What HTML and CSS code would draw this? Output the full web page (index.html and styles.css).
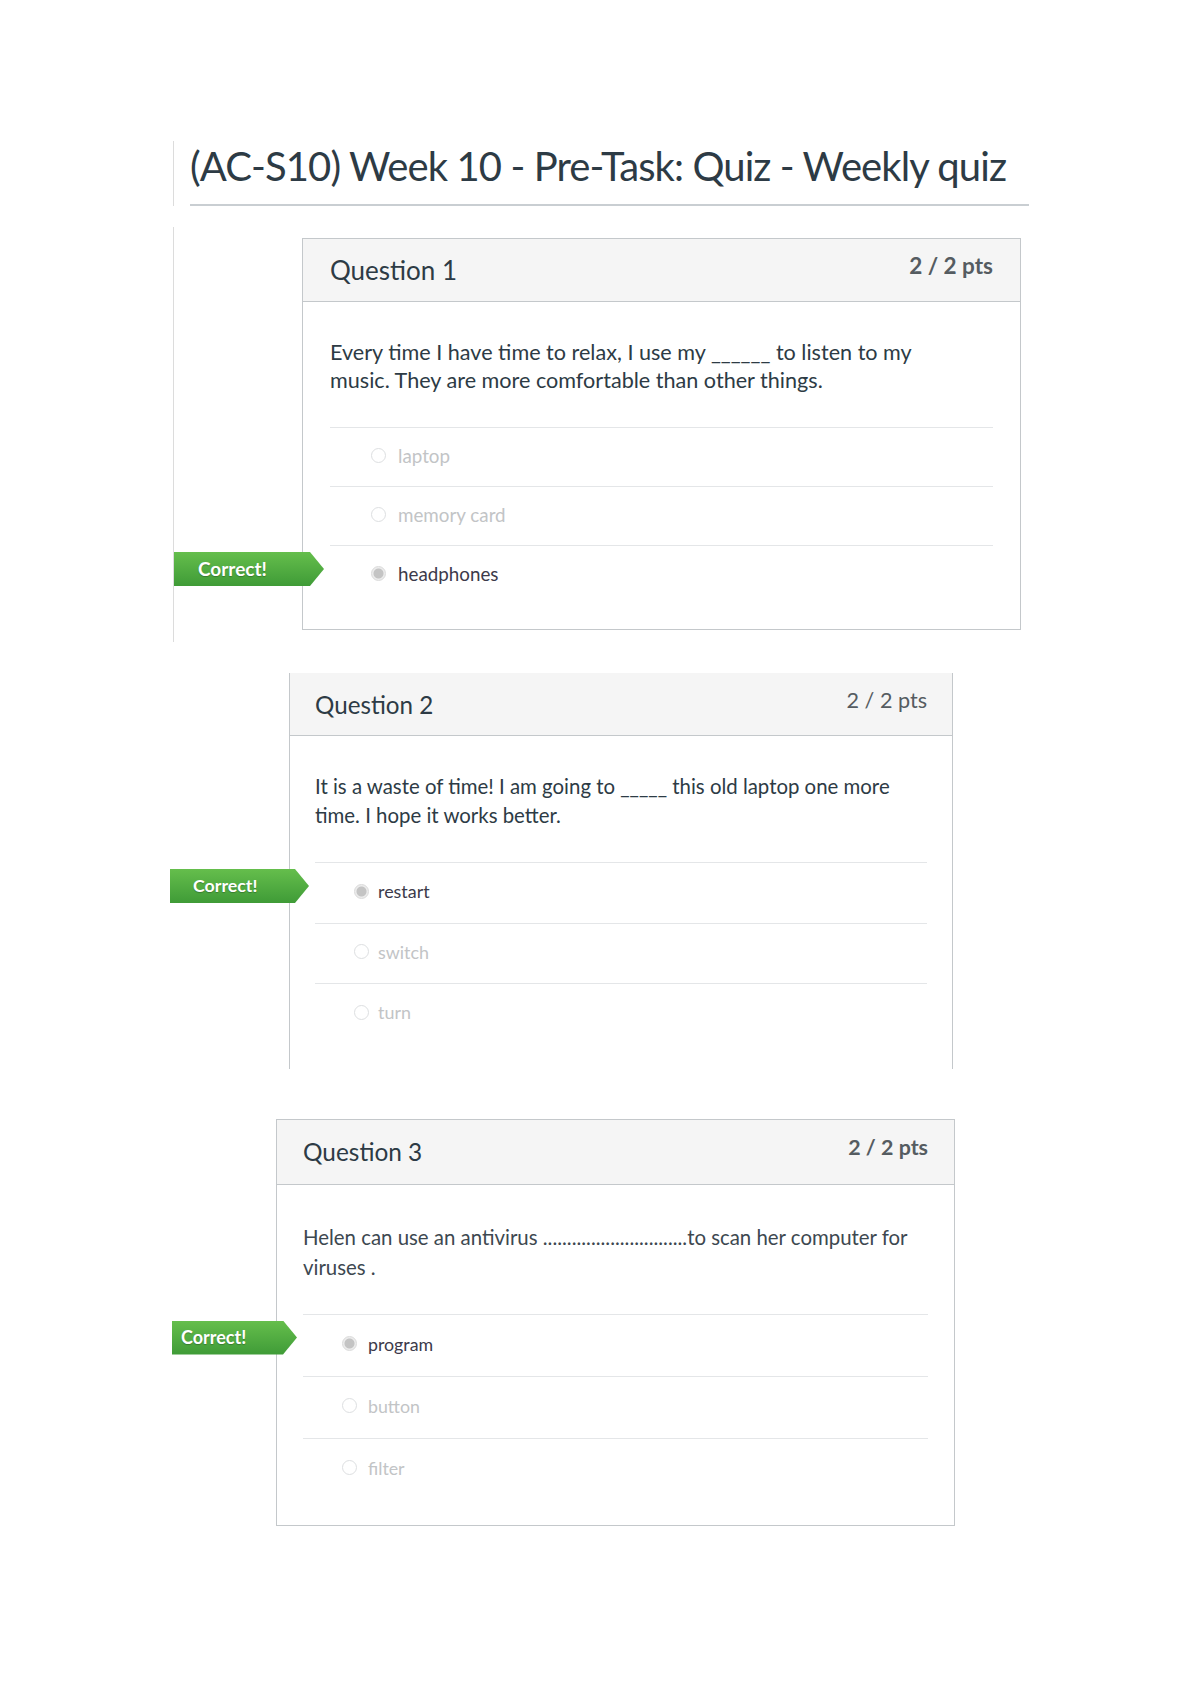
FILE: index.html
```html
<!DOCTYPE html>
<html lang="en">
<head>
<meta charset="utf-8">
<title>(AC-S10) Week 10 - Pre-Task: Quiz - Weekly quiz</title>
<link rel="stylesheet" href="styles.css">
</head>
<body>
<div class="page">
  <header class="title-block">
    <h1 class="title">(AC-S10) Week 10 - Pre-Task: Quiz - Weekly quiz</h1>
  </header>

  <section class="q-wrap q-wrap--1">
    <div class="card card--1">
      <div class="card-head">
        <h2 class="q-name">Question 1</h2>
        <span class="q-pts q-pts--bold">2 / 2 pts</span>
      </div>
      <div class="card-body">
        <p class="q-text">Every time I have time to relax, I use my ______ to listen to my<br>music. They are more comfortable than other things.</p>
        <ul class="answers">
          <li class="answer"><span class="radio"></span><span class="answer-label">laptop</span></li>
          <li class="answer"><span class="radio"></span><span class="answer-label">memory card</span></li>
          <li class="answer answer--picked"><span class="badge">Correct!</span><span class="radio radio--on"></span><span class="answer-label">headphones</span></li>
        </ul>
      </div>
    </div>
  </section>

  <section class="q-wrap q-wrap--2">
    <div class="card card--2">
      <div class="card-head">
        <h2 class="q-name">Question 2</h2>
        <span class="q-pts">2 / 2 pts</span>
      </div>
      <div class="card-body">
        <p class="q-text">It is a waste of time! I am going to _____ this old laptop one more<br>time. I hope it works better.</p>
        <ul class="answers">
          <li class="answer answer--picked"><span class="badge">Correct!</span><span class="radio radio--on"></span><span class="answer-label">restart</span></li>
          <li class="answer"><span class="radio"></span><span class="answer-label">switch</span></li>
          <li class="answer"><span class="radio"></span><span class="answer-label">turn</span></li>
        </ul>
      </div>
    </div>
  </section>

  <section class="q-wrap q-wrap--3">
    <div class="card card--3">
      <div class="card-head">
        <h2 class="q-name">Question 3</h2>
        <span class="q-pts q-pts--bold">2 / 2 pts</span>
      </div>
      <div class="card-body">
        <p class="q-text q-text--light">Helen can use an antivirus ..............................to scan her computer for<br>viruses .</p>
        <ul class="answers">
          <li class="answer answer--picked"><span class="badge">Correct!</span><span class="radio radio--on"></span><span class="answer-label">program</span></li>
          <li class="answer"><span class="radio"></span><span class="answer-label">button</span></li>
          <li class="answer"><span class="radio"></span><span class="answer-label">filter</span></li>
        </ul>
      </div>
    </div>
  </section>
</div>
</body>
</html>
```

FILE: styles.css
```css
* { box-sizing: border-box; }

body {
  margin: 0;
  background: #ffffff;
  font-family: Lato, "Noto Sans", "Liberation Sans", sans-serif;
  color: #2d3b45;
}

.page {
  padding: 141px 0 120px;
}

/* Title */
.title-block {
  margin-left: 173px;
  border-left: 1px solid #dcdcdc;
  height: 65px;
}

.title {
  margin: 0 0 0 16px;
  width: 839px;
  height: 65px;
  padding-top: 1px;
  border-bottom: 2px solid #c9ced2;
  font-size: 40px;
  line-height: 48px;
  letter-spacing: -0.9px;
  font-weight: 400;
  color: #2d3b45;
  white-space: nowrap;
}

/* Question wrappers */
.q-wrap--1 {
  margin: 21px 0 0 173px;
  padding: 11px 0 12px 128px;
  border-left: 1px solid #dcdcdc;
}

.q-wrap--2 {
  margin: 31px 0 0 289px;
}

.q-wrap--3 {
  margin: 50px 0 0 276px;
}

/* Card */
.card {
  border: 1px solid #c4c8cb;
  background: #fff;
}

.card--1 {
  width: 719px;
  --pad: 27px; --row: 59px;
  --name-fs: 26px; --pts-fs: 22.5px; --text-fs: 21.6px; --ans-fs: 18.8px;
  --gap: 12px; --ans-left: 41px;
  --badge-w: 150px; --badge-pad: 24px; --badge-fs: 19px;
}
.card--2 {
  width: 664px;
  border-top: none; border-bottom: none;
  --pad: 25px; --row: 60.5px;
  --name-fs: 24.2px; --pts-fs: 21.6px; --text-fs: 20.4px; --ans-fs: 17.9px;
  --gap: 9px; --ans-left: 39px;
  --badge-w: 139px; --badge-pad: 23px; --badge-fs: 17.8px;
}
.card--3 {
  width: 679px;
  --pad: 26px; --row: 62px;
  --name-fs: 24.4px; --pts-fs: 21.4px; --text-fs: 20.4px; --ans-fs: 17.8px;
  --gap: 11px; --ans-left: 39px;
  --badge-w: 125px; --badge-pad: 9px; --badge-fs: 18px;
}

.card-head {
  display: flex;
  justify-content: space-between;
  align-items: center;
  height: 63px;
  padding: 0 var(--pad);
  background: #f5f5f5;
  border-bottom: 1px solid #c4c8cb;
}

.card--3 .card-head { height: 65px; }

.q-name {
  margin: 0;
  font-size: var(--name-fs);
  font-weight: 400;
  color: #2d3b45;
}

.q-pts {
  padding-bottom: 9px;
  font-size: var(--pts-fs);
  color: #555c61;
}

.q-pts--bold { font-weight: 700; }

.card-body {
  padding: 36px var(--pad) 25px;
}

.card--3 .card-body { padding-top: 37px; }

.q-text {
  margin: 0 0 33px;
  font-size: var(--text-fs);
  line-height: 28px;
  color: #2d3b45;
  white-space: nowrap;
}

.card--2 .q-text { line-height: 29px; margin-bottom: 32px; }
.q-text--light { line-height: 30px; color: #3d4850; margin-bottom: 32px; }

/* Answers */
.answers {
  margin: 0;
  padding: 0;
  list-style: none;
}

.answer {
  position: relative;
  display: flex;
  align-items: center;
  gap: var(--gap);
  height: var(--row);
  padding: 0 0 3px var(--ans-left);
  border-top: 1px solid #e4e6e8;
  font-size: var(--ans-fs);
  color: #c2c4c6;
}

.answer--picked { color: #3c3a4a; }

.radio {
  flex: none;
  width: 15px;
  height: 15px;
  border-radius: 50%;
  border: 1px solid #dddfe1;
  background: #fff;
}

.radio--on {
  border-color: #dadada;
  background: radial-gradient(circle, #c4c4c4 0 4.5px, #ececec 5.5px);
}

/* Correct badge */
.badge {
  position: absolute;
  top: 6px;
  right: calc(100% + 6px);
  width: var(--badge-w);
  height: 34px;
  display: flex;
  align-items: center;
  padding-left: var(--badge-pad);
  padding-bottom: 2px;
  background: linear-gradient(#65be4c, #3f9b37);
  clip-path: polygon(0 0, calc(100% - 14px) 0, 100% 50%, calc(100% - 14px) 100%, 0 100%);
  color: #ffffff;
  font-size: var(--badge-fs);
  font-weight: 700;
  text-shadow: 0 1px 1px rgba(0, 0, 0, 0.25);
}
```
